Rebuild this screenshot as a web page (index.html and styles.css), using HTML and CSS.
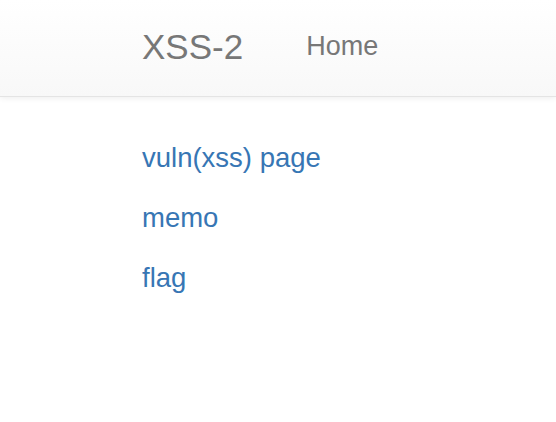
FILE: index.html
```html
<!DOCTYPE html>
<html>
<head>
<meta charset="utf-8">
<title>XSS-2</title>
<link rel="stylesheet" href="styles.css">
</head>
<body>
<nav class="navbar">
  <div class="container nav-row">
    <a class="brand" href="#">XSS-2</a>
    <a class="nav-link" href="#">Home</a>
  </div>
</nav>
<main class="container links">
  <a class="link" href="#">vuln(xss) page</a>
  <a class="link" href="#">memo</a>
  <a class="link" href="#">flag</a>
</main>
</body>
</html>
```
FILE: styles.css
```css
html, body {
  margin: 0;
  padding: 0;
  background: #fff;
}
body {
  font-family: "Liberation Sans", Arial, Helvetica, sans-serif;
}
a {
  text-decoration: none;
}
.container {
  padding-left: 142px;
  padding-right: 15px;
}
.navbar {
  height: 96px;
  box-sizing: content-box;
  background: linear-gradient(to bottom, #ffffff 0%, #f8f8f8 100%);
  border-bottom: 1px solid #e4e4e4;
  box-shadow: 0 1px 6px rgba(0, 0, 0, 0.075);
}
.nav-row {
  display: flex;
  align-items: flex-start;
  padding-top: 27px;
  line-height: 39px;
}
.brand {
  font-size: 35px;
  color: #777;
  margin-right: 63px;
}
.nav-link {
  font-size: 27px;
  color: #777;
}
.links {
  display: flex;
  flex-direction: column;
  align-items: flex-start;
  gap: 21px;
  margin-top: 41px;
}
.link {
  font-size: 27.5px;
  line-height: 39px;
  color: #3776b4;
}
```
